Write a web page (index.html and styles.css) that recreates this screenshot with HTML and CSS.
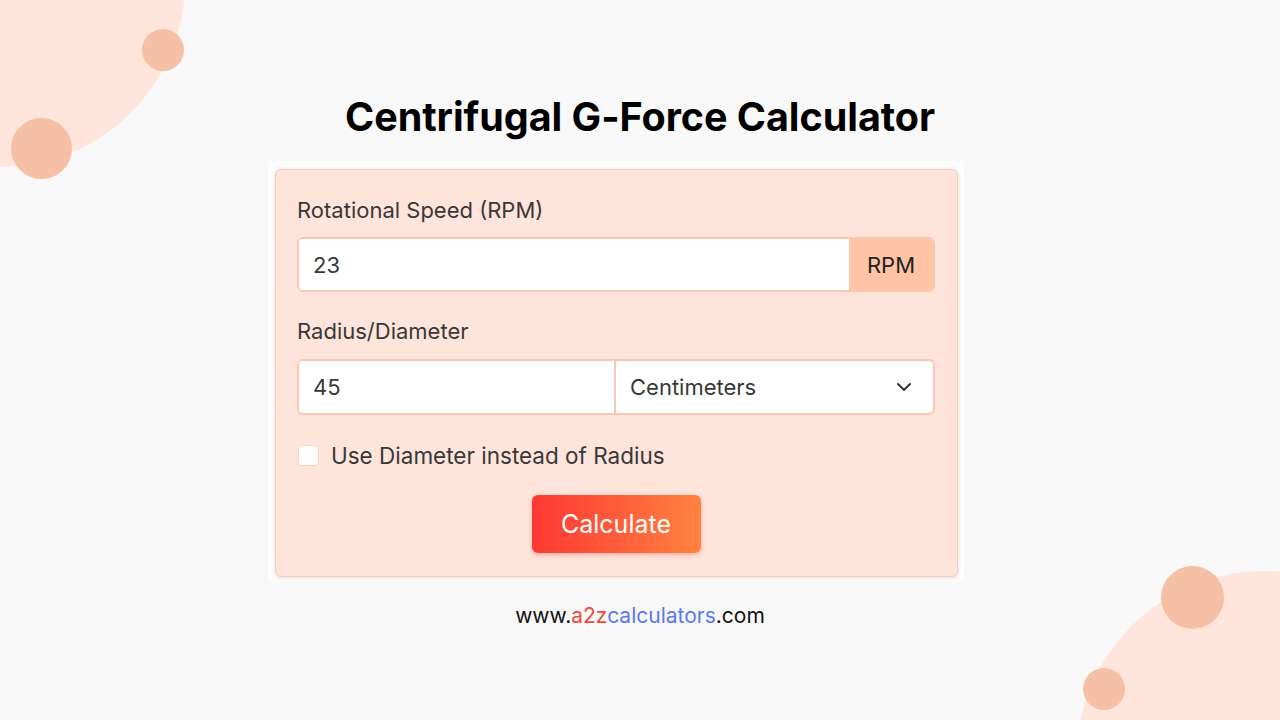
FILE: index.html
```html
<!DOCTYPE html>
<html>
<head>
<meta charset="utf-8">
<link rel="stylesheet" href="styles.css">
</head>
<body>
<div class="stage">
  <div class="blob blob-tl"></div>
  <div class="dot dot-a"></div>
  <div class="dot dot-b"></div>
  <div class="blob blob-br"></div>
  <div class="dot dot-c"></div>
  <div class="dot dot-d"></div>

  <main class="page">
    <h1 class="title">Centrifugal G-Force Calculator</h1>
    <div class="frame">
      <form class="card">
        <label class="label">Rotational Speed (RPM)</label>
        <div class="group">
          <input class="field" type="text" value="23">
          <span class="addon">RPM</span>
        </div>
        <label class="label label-2">Radius/Diameter</label>
        <div class="group group-2">
          <input class="field field-half" type="text" value="45">
          <div class="select">
            <span>Centimeters</span>
            <svg class="chev" width="16" height="10" viewBox="0 0 16 10"><path d="M2 2l6 6 6-6" fill="none" stroke="#333" stroke-width="2" stroke-linecap="round" stroke-linejoin="round"/></svg>
          </div>
        </div>
        <div class="check-row">
          <span class="box"></span>
          <span class="check-text">Use Diameter instead of Radius</span>
        </div>
        <div class="btn-row">
          <button type="button" class="btn">Calculate</button>
        </div>
      </form>
    </div>
    <p class="footer">www.<span class="red">a2z</span><span class="blue">calculators</span>.com</p>
  </main>
</div>
</body>
</html>
```
FILE: styles.css
```css
html, body {
  margin: 0;
  padding: 0;
}
body {
  background: #f8f8f8;
  font-family: Inter, "Liberation Sans", sans-serif;
  color: #333;
}
.stage {
  width: 1280px;
  height: 720px;
  position: relative;
  overflow: hidden;
  background: #f8f8f8;
}
.blob {
  position: absolute;
  border-radius: 50%;
  background: #ffe5dc;
}
.blob-tl {
  width: 370px;
  height: 370px;
  left: -185px;
  top: -203px;
}
.blob-br {
  width: 378px;
  height: 378px;
  left: 1076px;
  top: 571px;
}
.dot {
  position: absolute;
  border-radius: 50%;
  background: #f5c0a5;
}
.dot-a { width: 42px; height: 42px; left: 142px; top: 29px; }
.dot-b { width: 61px; height: 61px; left: 11px; top: 118px; }
.dot-c { width: 63px; height: 63px; left: 1161px; top: 566px; }
.dot-d { width: 42px; height: 42px; left: 1083px; top: 668px; }

.page {
  position: relative;
  display: flex;
  flex-direction: column;
  align-items: center;
}
.title {
  margin: 93px 0 0;
  font-size: 39.5px;
  line-height: 48px;
  font-weight: 700;
  color: #000;
  letter-spacing: -0.05px;
}
.frame {
  margin-top: 20px;
  margin-right: 48px;
  width: 696px;
  box-sizing: border-box;
  padding: 8px 6px 5px 7px;
  background: #fdfdfd;
}
.card {
  box-sizing: border-box;
  width: 683px;
  height: 408px;
  margin: 0;
  padding: 28px 22px 0 21px;
  background: #ffe4dc;
  border: 1px solid #fcc8b4;
  border-radius: 6px;
  box-shadow: 0 1px 4px rgba(0,0,0,0.12);
  display: flex;
  flex-direction: column;
}
.label {
  display: block;
  font-size: 22px;
  line-height: 24px;
  color: #383838;
}
.label-2 {
  margin-top: 27px;
}
.group {
  margin-top: 15px;
  display: flex;
  height: 55px;
  box-sizing: border-box;
  border: 2px solid #fdc6b0;
  border-radius: 6px;
  background: #fff;
  overflow: hidden;
}
.group-2 {
  height: 56px;
  margin-top: 16px;
}
.field {
  flex: 1;
  border: 0;
  outline: 0;
  padding: 0 14px;
  font-family: inherit;
  font-size: 22px;
  color: #383838;
  background: #fff;
  min-width: 0;
}
.field-half {
  flex: 0 0 317px;
  border-right: 2px solid #fdc6b0;
  box-sizing: border-box;
}
.addon {
  width: 84px;
  display: flex;
  align-items: center;
  justify-content: center;
  background: #ffc4a5;
  font-size: 22px;
  color: #222;
}
.select {
  flex: 1;
  display: flex;
  align-items: center;
  justify-content: space-between;
  padding: 0 21px 0 14px;
  font-size: 22px;
  color: #383838;
}
.chev {
  display: block;
}
.check-row {
  margin-top: 28px;
  display: flex;
  align-items: center;
  height: 24px;
}
.box {
  width: 19px;
  height: 19px;
  background: #fff;
  border: 1px solid #f3d6cb;
  border-radius: 4px;
  margin-left: 1px;
}
.check-text {
  margin-left: 12px;
  font-size: 22.5px;
  color: #383838;
}
.btn-row {
  margin-top: 28px;
  display: flex;
  justify-content: center;
}
.btn {
  width: 169px;
  height: 58px;
  border: 0;
  border-radius: 6px;
  background: linear-gradient(90deg, #ff3833 0%, #ff8240 100%);
  color: #fff;
  font-family: inherit;
  font-size: 25px;
  box-shadow: 0 2px 5px rgba(200,60,30,0.3);
}
.footer {
  margin: 22px 0 0;
  font-size: 21px;
  line-height: 24px;
  color: #111;
}
.red { color: #f04a3c; }
.blue { color: #5b77f2; }
```
